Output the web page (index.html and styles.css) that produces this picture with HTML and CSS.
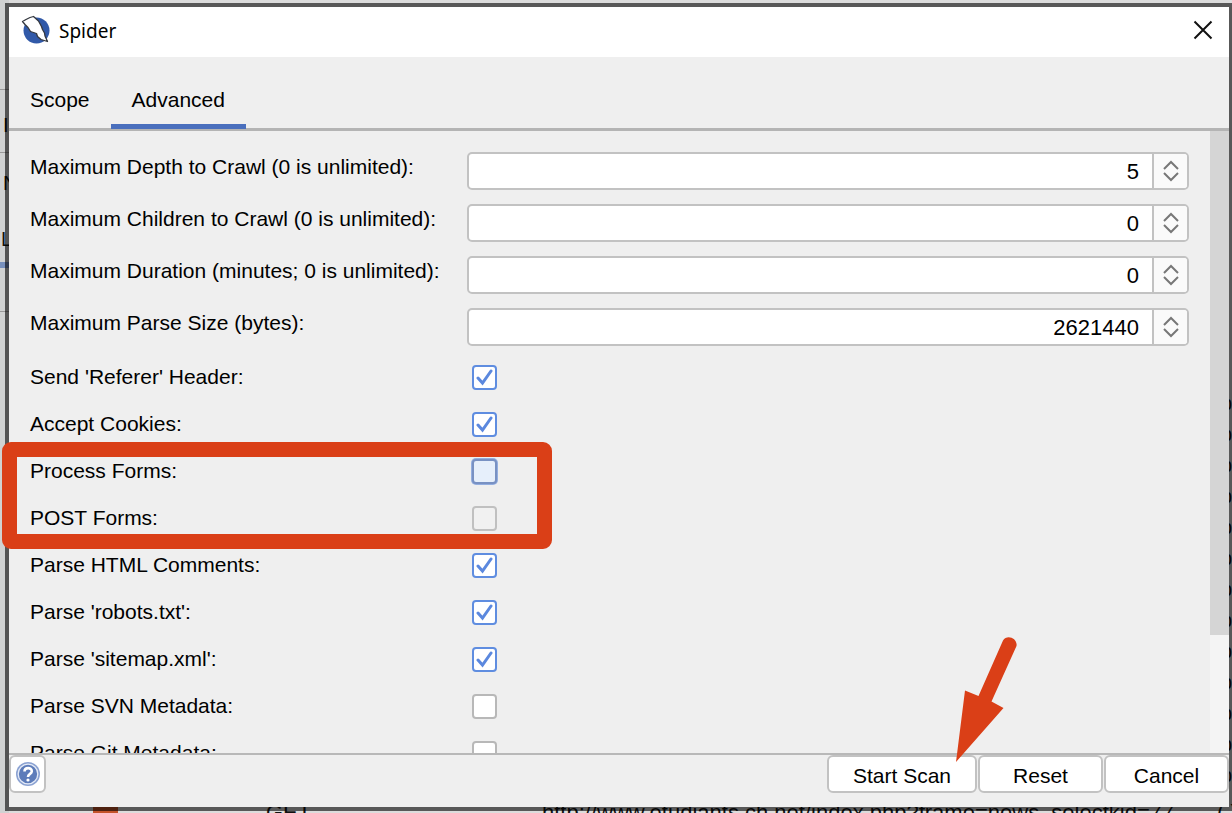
FILE: index.html
```html
<!DOCTYPE html>
<html lang="en">
<head>
<meta charset="utf-8">
<title>Spider</title>
<link rel="stylesheet" href="styles.css">
</head>
<body>
<div class="backdrop" aria-hidden="true">
  <div class="backdrop-left">
    <span class="rule r1"></span><span class="rule r2"></span><span class="rule r3"></span>
    <span class="glyph g1">I</span><span class="glyph g2">N</span><span class="glyph g3">L</span>
    <span class="tab-mark"></span>
  </div>
  <div class="backdrop-right">
    <span>b</span><span>b</span><span>b</span><span>b</span><span>b</span><span>b</span><span>b</span><span>b</span><span>b</span><span>b</span><span>b</span><span>b</span><span>b</span>
  </div>
  <div class="backdrop-row">
    <span class="flag"></span>
    <span class="method">GET</span>
    <span class="url">http://www.etudiants.ch.net/index.php?frame=news_selectkid=77</span>
    <span class="last">( )</span>
  </div>
</div>

<main class="dialog">
  <header class="titlebar">
    <svg class="logo" viewBox="0 0 30 30" aria-hidden="true">
      <circle cx="15.500" cy="15.500" r="13" fill="#3159a8"/>
      <path d="M1.500 6.500 5 4.500 9 2.500 12.500 1.500 17.500 6 20.500 11.500 21.500 14.500 23.500 18 24 21 26.500 26.500 20 24.500 16.500 21.500 15.500 18.500 9.500 16.500 7 12.500 4 9.500Z" fill="#fff" stroke="#34383f" stroke-width="1.300" stroke-linejoin="round"/>
    </svg>
    <h1 class="title">Spider</h1>
    <button class="close" type="button" aria-label="Close">
      <svg viewBox="0 0 20 20"><path d="M1.500 1.500 18.500 18.500M18.500 1.500 1.500 18.500"/></svg>
    </button>
  </header>

  <nav class="tabs" role="tablist">
    <button class="tab" type="button" role="tab" aria-selected="false">Scope</button>
    <button class="tab tab-active" type="button" role="tab" aria-selected="true">Advanced</button>
  </nav>

  <div class="scroller">
    <form class="form">
      <div class="row spin-row">
        <label for="depth">Maximum Depth to Crawl (0 is unlimited):</label>
        <div class="spinner"><input id="depth" type="text" inputmode="numeric" value="5">
          <div class="steps"><button type="button" aria-label="Increase"><svg viewBox="0 0 18 10"><path d="M2 9 9 2 16 9"/></svg></button><button type="button" aria-label="Decrease"><svg viewBox="0 0 18 10"><path d="M2 1 9 8 16 1"/></svg></button></div></div>
      </div>
      <div class="row spin-row">
        <label for="children">Maximum Children to Crawl (0 is unlimited):</label>
        <div class="spinner"><input id="children" type="text" inputmode="numeric" value="0">
          <div class="steps"><button type="button" aria-label="Increase"><svg viewBox="0 0 18 10"><path d="M2 9 9 2 16 9"/></svg></button><button type="button" aria-label="Decrease"><svg viewBox="0 0 18 10"><path d="M2 1 9 8 16 1"/></svg></button></div></div>
      </div>
      <div class="row spin-row">
        <label for="duration">Maximum Duration (minutes; 0 is unlimited):</label>
        <div class="spinner"><input id="duration" type="text" inputmode="numeric" value="0">
          <div class="steps"><button type="button" aria-label="Increase"><svg viewBox="0 0 18 10"><path d="M2 9 9 2 16 9"/></svg></button><button type="button" aria-label="Decrease"><svg viewBox="0 0 18 10"><path d="M2 1 9 8 16 1"/></svg></button></div></div>
      </div>
      <div class="row spin-row spin-last">
        <label for="size">Maximum Parse Size (bytes):</label>
        <div class="spinner"><input id="size" type="text" inputmode="numeric" value="2621440">
          <div class="steps"><button type="button" aria-label="Increase"><svg viewBox="0 0 18 10"><path d="M2 9 9 2 16 9"/></svg></button><button type="button" aria-label="Decrease"><svg viewBox="0 0 18 10"><path d="M2 1 9 8 16 1"/></svg></button></div></div>
      </div>
      <div class="row"><label for="referer">Send 'Referer' Header:</label><span class="check"><input id="referer" type="checkbox" checked><svg viewBox="0 0 17 17"><path d="M2 9 6.500 14 15 2"/></svg></span></div>
      <div class="row"><label for="cookies">Accept Cookies:</label><span class="check"><input id="cookies" type="checkbox" checked><svg viewBox="0 0 17 17"><path d="M2 9 6.500 14 15 2"/></svg></span></div>
      <div class="marked">
        <div class="row"><label for="forms">Process Forms:</label><span class="check"><input id="forms" class="focused" type="checkbox"></span></div>
        <div class="row"><label for="post">POST Forms:</label><span class="check"><input id="post" type="checkbox" disabled></span></div>
      </div>
      <div class="row"><label for="comments">Parse HTML Comments:</label><span class="check"><input id="comments" type="checkbox" checked><svg viewBox="0 0 17 17"><path d="M2 9 6.500 14 15 2"/></svg></span></div>
      <div class="row"><label for="robots">Parse 'robots.txt':</label><span class="check"><input id="robots" type="checkbox" checked><svg viewBox="0 0 17 17"><path d="M2 9 6.500 14 15 2"/></svg></span></div>
      <div class="row"><label for="sitemap">Parse 'sitemap.xml':</label><span class="check"><input id="sitemap" type="checkbox" checked><svg viewBox="0 0 17 17"><path d="M2 9 6.500 14 15 2"/></svg></span></div>
      <div class="row"><label for="svn">Parse SVN Metadata:</label><span class="check"><input id="svn" type="checkbox"></span></div>
      <div class="row"><label for="git">Parse Git Metadata:</label><span class="check"><input id="git" type="checkbox"></span></div>
    </form>
    <div class="scrollbar"><div class="thumb"></div></div>
  </div>

  <footer class="footer">
    <button class="btn help" type="button" aria-label="Help">
      <svg viewBox="0 0 26 26" aria-hidden="true">
        <circle cx="13" cy="13" r="12" fill="#8ba2d2"/>
        <circle cx="13" cy="13" r="9.800" fill="#5d7cba" stroke="#e4eaf6" stroke-width="1.300"/>
        <path d="M9.500 10.500C9.500 6 16.800 6 16.800 10.200 16.800 13 13 12.800 13 16" fill="none" stroke="#fff" stroke-width="2.600"/>
        <circle cx="13" cy="19" r="1.600" fill="#fff"/>
      </svg>
    </button>
    <button class="btn start" type="button">Start Scan</button>
    <button class="btn" type="button">Reset</button>
    <button class="btn" type="button">Cancel</button>
    <svg class="arrow" viewBox="0 0 64 130" aria-hidden="true">
      <path d="M48 5.500C52 -1.500 63 3.500 61.500 11L36.500 66.500 48.500 73 1 127 10 55.500 23.500 61Z" fill="#da3f17"/>
    </svg>
  </footer>
</main>
</body>
</html>
```

FILE: styles.css
```css
*, *::after { box-sizing: border-box; }

body {
  margin: 0;
  height: 100vh;
  display: flex;
  padding: 3px 0 2px 5px;
  background: #dcdcdc;
  font-family: "Liberation Sans", Arial, sans-serif;
  font-size: 21px;
  line-height: 26px;
  color: #000;
  overflow: hidden;
}

button, input { font: inherit; color: inherit; margin: 0; }

.dialog {
  position: relative;
  flex: 1;
  min-width: 0;
  display: flex;
  flex-direction: column;
  border: 4px solid rgba(0, 0, 0, 0.6);
  border-width: 4px 3px 4px 4px;
}

/* Title bar */
.titlebar {
  display: flex;
  align-items: center;
  height: 50px;
  padding: 0 16px 4px 12px;
  background: #fff;
}
.logo { width: 30px; height: 30px; }
.title {
  flex: 1;
  margin: 0 0 0 8px;
  padding-top: 2px;
  font-family: "Noto Sans", sans-serif;
  font-size: 19px;
  font-weight: 400;
}
.close {
  display: flex;
  padding: 0;
  border: 0;
  background: none;
}
.close svg { width: 20px; height: 20px; fill: none; stroke: #111; stroke-width: 2; }

/* Tabs */
.tabs {
  display: flex;
  height: 74px;
  padding: 19px 0 2px;
  background: linear-gradient(#b4b4b4, #b4b4b4) bottom / 100% 3px no-repeat #efefef;
}
.tab {
  padding: 0 21px;
  border: 0;
  border-bottom: 5px solid transparent;
  background: none;
}
.tab-active { border-bottom-color: #4a6fbd; }

/* Scrolling form */
.scroller {
  flex: 1;
  min-height: 0;
  display: flex;
  overflow-x: visible;
  overflow-y: clip;
  background: #efefef;
}
.form {
  flex: 1;
  min-width: 0;
  padding: 21px 21px 0 21px;
}
.row {
  display: grid;
  grid-template-columns: 437px 1fr;
  align-items: center;
  height: 47px;
}
.row label { padding-bottom: 2px; }
.spin-row { height: 52px; align-items: start; }
.spin-last { height: 46px; }
.spin-row label { padding: 2px 0 0; }

.spinner {
  display: flex;
  height: 38px;
  border: 2px solid #c2c2c2;
  border-radius: 5px;
  background: #fff;
  overflow: hidden;
}
.spinner input {
  flex: 1;
  min-width: 0;
  padding: 2px 13px 0 8px;
  border: 0;
  outline: 0;
  background: none;
  font-size: 22px;
  text-align: right;
}
.steps {
  display: flex;
  flex-direction: column;
  justify-content: center;
  width: 35px;
  border-left: 2px solid #c2c2c2;
  background: #fafafa;
}
.steps button {
  display: flex;
  justify-content: center;
  padding: 1px 0;
  border: 0;
  background: none;
}
.steps svg { width: 18px; height: 10px; fill: none; stroke: #777; stroke-width: 2; }

.check {
  display: grid;
  width: 25px;
  height: 25px;
  margin-left: 5px;
  place-items: center;
}
.check > * { grid-area: 1 / 1; }
.check input {
  appearance: none;
  width: 25px;
  height: 25px;
  border: 2px solid #b8b8b8;
  border-radius: 4px;
  background: #fff;
}
.check input:checked { border-color: #5f8de0; }
.check input:disabled { background: #f1f1f1; border-color: #c0c0c0; }
.check .focused {
  border-color: #7891c3;
  background: #e6effb;
  box-shadow: 0 0 0 1px #93aee0;
}
.check svg {
  width: 17px;
  height: 17px;
  fill: none;
  stroke: #5b88de;
  stroke-width: 3;
  stroke-linecap: round;
  pointer-events: none;
}

/* Red highlight drawn round two rows */
.marked { position: relative; }
.marked::after {
  content: "";
  position: absolute;
  z-index: 2;
  top: -6px;
  bottom: -7px;
  left: -28px;
  width: 550px;
  border: 15px solid #da3f17;
  border-radius: 9px;
  pointer-events: none;
}

.scrollbar { width: 19px; background: #f4f4f4; }
.thumb { height: 81%; background: #d5d5d5; }

/* Footer */
.footer {
  position: relative;
  display: flex;
  gap: 1px;
  height: 54px;
  padding-bottom: 14px;
  border-top: 2px solid #b8b8b8;
  background: #efefef;
}
.btn {
  min-width: 125px;
  padding: 3px 0 0;
  border: 2px solid #c2c2c2;
  border-radius: 6px;
  background: #fff;
}
.help {
  display: flex;
  align-items: center;
  justify-content: center;
  min-width: 0;
  width: 37px;
  margin-right: auto;
  padding: 0;
}
.help svg { width: 26px; height: 26px; }
.start { min-width: 150px; }
.arrow {
  position: absolute;
  z-index: 3;
  right: 210px;
  bottom: 42px;
  width: 64px;
  height: 130px;
}

/* Window partly visible behind the dialog */
.backdrop { position: absolute; inset: 0; overflow: hidden; color: #111; }
.backdrop-left {
  position: absolute;
  inset: 0 auto 0 0;
  width: 9px;
  overflow: hidden;
  background: #d0d2d2;
}
.rule { position: absolute; left: 0; width: 9px; height: 1px; background: #999; }
.r1 { top: 89px; }
.r2 { top: 152px; }
.r3 { top: 311px; }
.glyph { position: absolute; left: 3px; font-size: 20px; }
.g1 { top: 112px; }
.g2 { top: 170px; }
.g3 { top: 226px; left: 1px; }
.tab-mark { position: absolute; top: 262px; left: 0; width: 9px; height: 6px; background: #7790bd; }
.backdrop-right {
  position: absolute;
  top: 390px;
  right: 0;
  width: 8px;
  overflow: hidden;
  display: grid;
  grid-auto-rows: 31px;
  font-size: 20px;
}
.backdrop-right span { margin-left: -3px; }
.backdrop-row {
  position: absolute;
  left: 0;
  right: 0;
  bottom: -11px;
  height: 24px;
  font-size: 22px;
  white-space: nowrap;
}
.backdrop-row span { position: absolute; top: 0; }
.backdrop-row .flag { left: 93px; width: 25px; height: 24px; background: #c4532a; }
.backdrop-row .method { left: 266px; }
.backdrop-row .url { left: 542px; }
.backdrop-row .last { left: 1217px; }
```
